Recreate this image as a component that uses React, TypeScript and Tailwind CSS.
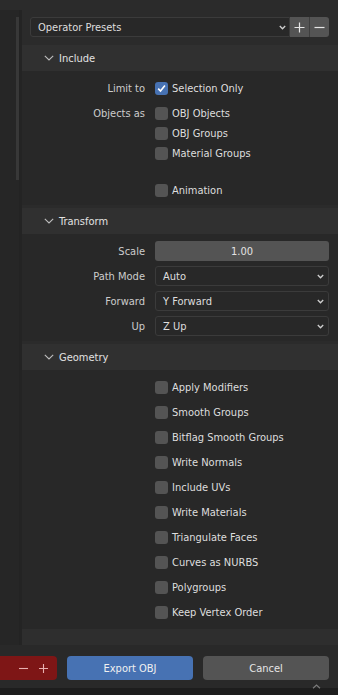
import React from "react";

const Chevron = ({ className = "" }: { className?: string }) => (
  <svg width="10" height="6" viewBox="0 0 10 6" className={className}>
    <path d="M0.8 0.8 L5 5 L9.2 0.8" fill="none" stroke="#bdbdbd" strokeWidth="1.1" />
  </svg>
);

const SmallChevron = () => (
  <svg width="7" height="5" viewBox="0 0 7 5">
    <path d="M0.8 1 L3.5 3.8 L6.2 1" fill="none" stroke="#d0d0d0" strokeWidth="1.3" />
  </svg>
);

const Check = ({ checked = false }: { checked?: boolean }) => (
  <div
    className={`w-[13px] h-[13px] rounded-[3px] flex items-center justify-center shrink-0 ${
      checked ? "bg-[#4772b3]" : "bg-[#545454]"
    }`}
  >
    {checked && (
      <svg width="11" height="11" viewBox="0 0 11 11">
        <path d="M2.2 5.6 L4.5 8 L8.9 2.6" fill="none" stroke="#ffffff" strokeWidth="1.6" />
      </svg>
    )}
  </div>
);

const Row = ({
  label,
  children,
  className = "",
}: {
  label?: string;
  children: React.ReactNode;
  className?: string;
}) => (
  <div className={`flex items-center h-[20px] ${className}`}>
    <div className="w-[123px] text-right text-[#cccccc] shrink-0">{label}</div>
    <div className="ml-[10px] w-[174px] flex items-center">{children}</div>
  </div>
);

const CheckRow = ({
  label,
  text,
  checked,
  className = "",
}: {
  label?: string;
  text: string;
  checked?: boolean;
  className?: string;
}) => (
  <Row label={label} className={className}>
    <Check checked={checked} />
    <span className="ml-[4px] text-[#dedede]">{text}</span>
  </Row>
);

const Dropdown = ({ value }: { value: string }) => (
  <div className="w-full h-[20px] bg-[#282828] border border-[#3b3b3b] rounded-[3px] flex items-center pl-[7px] pr-[4px] text-[#dedede]">
    <span className="flex-1">{value}</span>
    <SmallChevron />
  </div>
);

const Header = ({ title }: { title: string }) => (
  <div className="h-[26px] bg-[#303030] flex items-center pl-[22px] text-[#e2e2e2]">
    <Chevron />
    <span className="ml-[5px]">{title}</span>
  </div>
);

export default function App() {
  return (
    <div className="w-[338px] h-[695px] bg-[#2b2b2b] overflow-hidden flex flex-col font-['DejaVu_Sans_Condensed','DejaVu_Sans',sans-serif] [font-stretch:condensed] text-[11px] leading-none">
      <div className="h-[645px] flex shrink-0">
        {/* left file area edge */}
        <div className="w-[22px] pt-[10px] shrink-0">
          <div className="h-full bg-[#262626] flex">
            <div className="w-[16px]" />
            <div className="w-[3px] h-full flex flex-col pt-[7px]">
              <div className="h-[163px] bg-[#383838]" />
            </div>
            <div className="w-[1px] bg-[#232323]" />
            <div className="w-[2px] bg-[#242424]" />
          </div>
        </div>

        {/* sidebar */}
        <div className="flex-1 flex flex-col">
          <div className="pt-[17px] pl-[8px] pr-[9px] flex h-[37px]">
            <div className="flex-1 h-[20px] bg-[#282828] border border-[#3b3b3b] rounded-l-[3px] flex items-center pl-[7px] pr-[3px] text-[#dedede]">
              <span className="flex-1">Operator Presets</span>
              <SmallChevron />
            </div>
            <div className="w-[20px] h-[20px] bg-[#545454] flex items-center justify-center border-r border-[#3e3e3e]">
              <svg width="11" height="11" viewBox="0 0 11 11">
                <path d="M5.5 0.5 V10.5 M0.5 5.5 H10.5" stroke="#e6e6e6" strokeWidth="1.2" />
              </svg>
            </div>
            <div className="w-[19px] h-[20px] bg-[#545454] rounded-r-[3px] flex items-center justify-center">
              <svg width="11" height="11" viewBox="0 0 11 11">
                <path d="M0.5 5.5 H10.5" stroke="#e6e6e6" strokeWidth="1.2" />
              </svg>
            </div>
          </div>

          <div className="mt-[8px]">
            <Header title="Include" />
            <div className="bg-[#282828] pt-[7px] pb-[5px]">
              <CheckRow label="Limit to" text="Selection Only" checked />
              <CheckRow label="Objects as" text="OBJ Objects" className="mt-[5px]" />
              <CheckRow text="OBJ Groups" />
              <CheckRow text="Material Groups" />
              <CheckRow text="Animation" className="mt-[17px]" />
            </div>
          </div>

          <div className="mt-[3px]">
            <Header title="Transform" />
            <div className="bg-[#282828] pt-[7px] pb-[5px] flex flex-col gap-[5px]">
              <Row label="Scale">
                <div className="w-full h-[20px] bg-[#545454] rounded-[3px] flex items-center justify-center text-[#e2e2e2]">
                  1.00
                </div>
              </Row>
              <Row label="Path Mode">
                <Dropdown value="Auto" />
              </Row>
              <Row label="Forward">
                <Dropdown value="Y Forward" />
              </Row>
              <Row label="Up">
                <Dropdown value="Z Up" />
              </Row>
            </div>
          </div>

          <div className="mt-[3px]">
            <Header title="Geometry" />
            <div className="bg-[#282828] pt-[7px] pb-[7px] flex flex-col gap-[5px]">
              <CheckRow text="Apply Modifiers" />
              <CheckRow text="Smooth Groups" />
              <CheckRow text="Bitflag Smooth Groups" />
              <CheckRow text="Write Normals" />
              <CheckRow text="Include UVs" />
              <CheckRow text="Write Materials" />
              <CheckRow text="Triangulate Faces" />
              <CheckRow text="Curves as NURBS" />
              <CheckRow text="Polygroups" />
              <CheckRow text="Keep Vertex Order" />
            </div>
          </div>
          <div className="flex-1 bg-[#2e2e2e]" />
        </div>
      </div>

      {/* bottom buttons */}
      <div className="h-[43px] bg-[#292929] pt-[11px] flex shrink-0">
        <div className="w-[57px] h-[24px] bg-[#7e1616] rounded-r-[4px] flex items-center justify-end pr-[9px] gap-[11px] text-[#e8b0b0]">
          <svg width="9" height="9" viewBox="0 0 9 9">
            <path d="M0 4.5 H9" stroke="#e8b0b0" strokeWidth="1.1" />
          </svg>
          <svg width="9" height="9" viewBox="0 0 9 9">
            <path d="M4.5 0 V9 M0 4.5 H9" stroke="#e8b0b0" strokeWidth="1.1" />
          </svg>
        </div>
        <div className="ml-[10px] w-[126px] h-[24px] bg-[#4772b3] rounded-[4px] flex items-center justify-center text-[#f0f0f0]">
          Export OBJ
        </div>
        <div className="ml-[10px] w-[126px] h-[24px] bg-[#545454] rounded-[4px] flex items-center justify-center text-[#e6e6e6]">
          Cancel
        </div>
      </div>
      <div className="flex-1 bg-[#1d1d1d] relative">
        <svg width="9" height="5" viewBox="0 0 9 5" className="absolute left-[312px] -top-[4px]">
          <path d="M1 4.2 L4.5 1 L8 4.2" fill="none" stroke="#7a7a7a" strokeWidth="1.2" />
        </svg>
      </div>
    </div>
  );
}
